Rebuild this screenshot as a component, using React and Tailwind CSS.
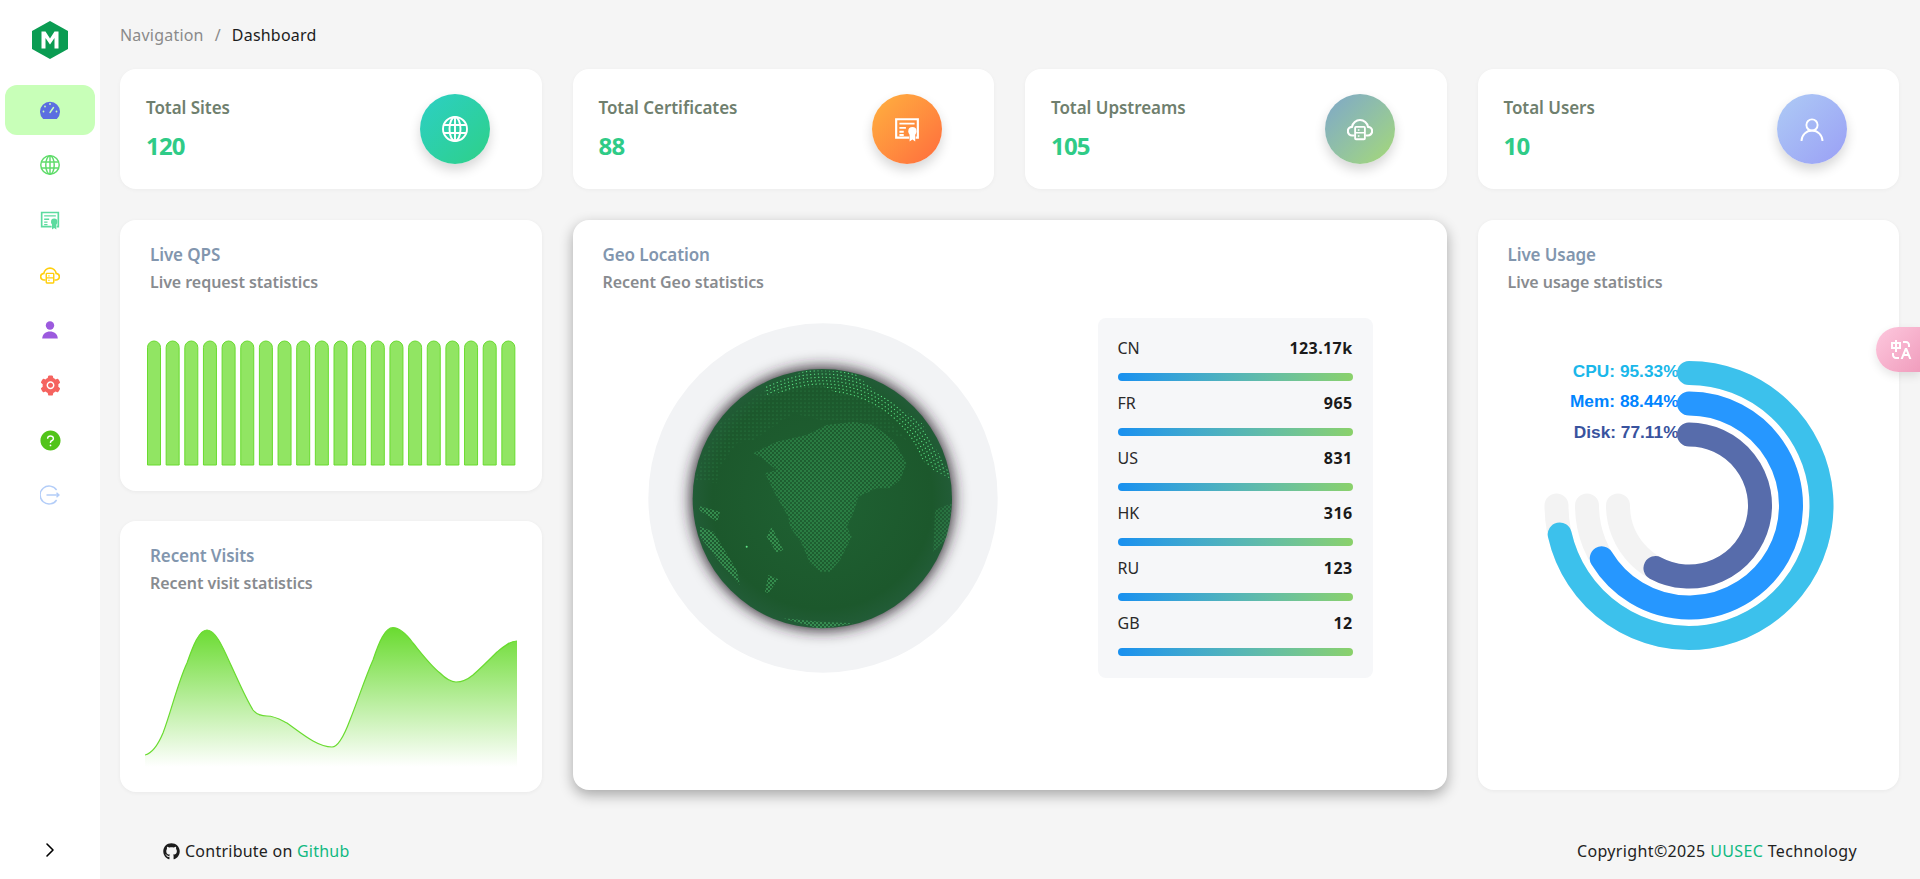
import React from "react";
import { FaGithub } from "react-icons/fa";
import { AiFillSetting, AiFillQuestionCircle } from "react-icons/ai";
import { RiTranslate } from "react-icons/ri";
import { ChevronRight } from "lucide-react";

const GaugeIcon = ({ className }) => (
  <svg viewBox="0 0 20 20" className={className}>
    <path d="M3.2 19 A10 10 0 1 1 16.8 19 Z" fill="currentColor" />
    <path d="M10 12.5 L13.5 7.5" stroke="#c8ffb8" strokeWidth="1.4" strokeLinecap="round" />
    <circle cx="10" cy="4" r="0.9" fill="#c8ffb8" />
    <circle cx="5" cy="6.5" r="0.9" fill="#c8ffb8" />
    <circle cx="3.5" cy="11.5" r="0.9" fill="#c8ffb8" />
    <circle cx="16.5" cy="11.5" r="0.9" fill="#c8ffb8" />
  </svg>
);

const GlobeIcon = ({ className }) => (
  <svg viewBox="0 0 26 26" fill="none" stroke="currentColor" strokeWidth="1.9" className={className}>
    <circle cx="13" cy="13" r="12" />
    <ellipse cx="13" cy="13" rx="5.5" ry="12" />
    <path d="M13 1v24M1.6 9h22.8M1.6 17h22.8" />
  </svg>
);

const CertIcon = ({ className }) => (
  <svg viewBox="0 0 24 24" fill="none" className={className}>
    <path d="M14 20H2V3h20v17h-2" stroke="currentColor" strokeWidth="2" />
    <path d="M5 7h14M5 11h6M5 14.5h4M5 17.5h4" stroke="currentColor" strokeWidth="1.7" />
    <circle cx="17" cy="14" r="3.8" fill="currentColor" />
    <path d="M14.4 15h5.2v8.5l-2.6-1.8-2.6 1.8z" fill="currentColor" />
  </svg>
);

const CloudIcon = ({ className }) => (
  <svg viewBox="0 0 24 24" fill="none" stroke="currentColor" className={className}>
    <path d="M6 18 H5 A4 4 0 0 1 4.6 10 A7.5 7.5 0 0 1 19.4 10 A4 4 0 0 1 19 18 H18" strokeWidth="2" strokeLinecap="round" />
    <rect x="7.5" y="10" width="9" height="11.5" rx="0.8" strokeWidth="1.7" />
    <path d="M7.5 15.5h9M10 13h1.5M10 18.5h1.5" strokeWidth="1.4" />
  </svg>
);

const UserLine = ({ className }) => (
  <svg viewBox="0 0 24 24" fill="none" stroke="currentColor" strokeWidth="1.9" className={className}>
    <circle cx="12" cy="8" r="5.6" />
    <path d="M1.5 24 A10.5 10.5 0 0 1 22.5 24" />
  </svg>
);

const UserSolid = ({ className }) => (
  <svg viewBox="0 0 20 20" fill="currentColor" className={className}>
    <circle cx="10" cy="5.5" r="4.2" />
    <path d="M2.2 18.5 C2.4 13.8 6 11.4 10 11.4 C14 11.4 17.6 13.8 17.8 18.5 Z" />
  </svg>
);

const LogoutIcon = ({ className }) => (
  <svg viewBox="0 0 20 20" fill="none" stroke="currentColor" strokeWidth="1.4" className={className}>
    <path d="M16.6 5 A9 9 0 1 0 16.6 15" />
    <path d="M6.5 10 H19 M16.5 7.8 L19 10 L16.5 12.2" />
  </svg>
);

const Logo = () => (
  <svg viewBox="0 0 36 38" className="w-9 h-[38px]">
    <path d="M18 0 L36 10 V28 L18 38 L0 28 V10 Z" fill="#0a9c52" />
    <path d="M9.5 10.5 H13.5 L18 17.5 L22.5 10.5 H26.5 V27.5 H22.5 V17 L18 23.5 L13.5 17 V27.5 H9.5 Z" fill="#fff" />
  </svg>
);

const navItems = [
  { icon: GaugeIcon, cls: "w-5 h-5 text-[#5b6ee1]", active: true },
  { icon: GlobeIcon, cls: "w-5 h-5 text-[#5fdc6a]" },
  { icon: CertIcon, cls: "w-5 h-5 text-[#5cdb9f]" },
  { icon: CloudIcon, cls: "w-5 h-5 text-[#ffcf0d]" },
  { icon: UserSolid, cls: "w-5 h-5 text-[#9c5ade]" },
  { icon: AiFillSetting, cls: "w-[23px] h-[23px] text-[#f5635f]" },
  { icon: AiFillQuestionCircle, cls: "w-[23px] h-[23px] text-[#52c41a]" },
  { icon: LogoutIcon, cls: "w-5 h-5 text-[#b3cdf8]" },
];

const stats = [
  { title: "Total Sites", value: "120", icon: GlobeIcon, size: "w-[26px] h-[26px]", bg: "bg-linear-to-br from-[#2dcfc4] to-[#2fd087]" },
  { title: "Total Certificates", value: "88", icon: CertIcon, size: "w-[26px] h-[26px]", bg: "bg-linear-to-br from-[#ffb13f] to-[#ff6a3d]" },
  { title: "Total Upstreams", value: "105", icon: CloudIcon, size: "w-[26px] h-[26px]", bg: "bg-linear-to-br from-[#7fa6c9] to-[#a6d972]" },
  { title: "Total Users", value: "10", icon: UserLine, size: "w-6 h-6", bg: "bg-linear-to-br from-[#aecbf5] to-[#9a9ff5]" },
];

const geo = [
  ["CN", "123.17k"],
  ["FR", "965"],
  ["US", "831"],
  ["HK", "316"],
  ["RU", "123"],
  ["GB", "12"],
];

const CardHead = ({ title, sub }) => (
  <>
    <div className="h-6 leading-6 text-[17px] font-semibold text-[#8296ae] tracking-[-0.1px]">{title}</div>
    <div className="h-6 leading-6 mt-[3px] text-base font-semibold text-[#888b8f] tracking-[-0.05px]">{sub}</div>
  </>
);

const QpsChart = () => (
  <svg width="376" height="126" className="block ml-[27px] mt-[46px]">
    {Array.from({ length: 20 }).map((_, i) => {
      const x = 0.5 + i * 18.65;
      return (
        <path
          key={i}
          d={`M${x} 125 V7.5 A6.5 6.5 0 0 1 ${x + 13} 7.5 V125 Z`}
          fill="#91e563"
          stroke="#69db2f"
          strokeWidth="1"
        />
      );
    })}
  </svg>
);

const curve =
  "M0,135 C8,133 13,125 18,113 C26,92 33,62 42,43 C48,26 54,10 62,10 C70,10 77,25 85,43 C93,60 100,77 108,90 C112,95 117,96 122,96 C130,96 136,100 142,103 C155,112 172,127 187,127 C193,127 199,116 205,100 C213,80 220,58 228,40 C234,22 240,7.7 248,7.7 C255,7.7 262,15 268,23 C277,34 286,46 295,53 C300,58 305,62 311,62 C317,62 322,60 328,55 C336,48 344,40 352,32 C358,27 365,21 372,21";

const VisitsChart = () => (
  <svg width="374" height="150" className="block ml-[25px] mt-[25px]">
    <defs>
      <linearGradient id="visits" x1="0" y1="7" x2="0" y2="147" gradientUnits="userSpaceOnUse">
        <stop offset="0" stopColor="#69db2f" />
        <stop offset="1" stopColor="#69db2f" stopOpacity="0" />
      </linearGradient>
    </defs>
    <path d={`${curve} L372,150 L0,150 Z`} fill="url(#visits)" />
    <path d={curve} fill="none" stroke="#69db2f" strokeWidth="1.2" />
  </svg>
);

const landBright = [
  "M240 650 L280 665 L350 780 L360 825 L310 770 L240 680 Z",
  "M236 588 L300 605 L292 635 L240 602 Z",
  "M445 795 L475 808 L445 850 L435 845 Z",
  "M440 680 L455 650 L490 720 L470 728 Z",
  "M490 925 L600 935 L700 940 L600 957 Z",
];

const africa =
  "M400 430 L470 395 L560 375 L620 345 L700 335 L760 345 L820 390 L860 460 L840 510 L810 535 L770 535 L715 560 L700 610 L680 650 L695 680 L660 750 L630 785 L600 785 L570 760 L545 700 L510 650 L505 620 L470 560 L435 490 L470 480 L420 440 Z";

const northDim =
  "M300 340 L430 240 L600 215 L760 270 L860 390 L720 330 L600 330 L520 310 L400 390 L350 400 L300 470 L290 520 L225 510 L250 440 Z";

const rimRight = "M945 600 L995 580 L985 680 L940 725 Z";

const Globe = () => (
  <svg viewBox="84 39 1050 1050" className="w-[350px] h-[350px] shrink-0 ml-[45px] mt-[5px]">
    <defs>
      <radialGradient id="sphere" cx="50%" cy="50%" r="50%">
        <stop offset="0" stopColor="#1f6233" />
        <stop offset="0.85" stopColor="#1c582c" />
        <stop offset="1" stopColor="#225c37" />
      </radialGradient>
      <pattern id="dotsBright" width="12" height="12" patternUnits="userSpaceOnUse">
        <circle cx="3" cy="3" r="2.1" fill="#5ce585" />
        <circle cx="9" cy="9" r="2.1" fill="#5ce585" />
      </pattern>
      <pattern id="dotsDim" width="12" height="12" patternUnits="userSpaceOnUse">
        <circle cx="3" cy="3" r="1.9" fill="#43c06b" />
        <circle cx="9" cy="9" r="1.9" fill="#43c06b" />
      </pattern>
      <pattern id="dotsThin" width="12" height="12" patternUnits="userSpaceOnUse">
        <circle cx="3" cy="3" r="1.6" fill="#3aa860" />
      </pattern>
      <filter id="halo" x="-20%" y="-20%" width="140%" height="140%">
        <feGaussianBlur stdDeviation="22" />
      </filter>
      <clipPath id="rimBand">
        <path d="M750 230 L905 340 L1000 510 L940 480 L850 400 L740 290 L600 225 L440 255 L430 230 L560 180 L700 185 Z" />
      </clipPath>
    </defs>
    <circle cx="609" cy="564" r="524" fill="#f2f3f5" />
    <circle cx="607" cy="566" r="394" fill="#2a2229" filter="url(#halo)" />
    <circle cx="607" cy="566" r="389" fill="url(#sphere)" />
    <path d={northDim} fill="url(#dotsThin)" opacity="0.6" />
    <path d={africa} fill="url(#dotsDim)" opacity="0.9" />
    <path d={rimRight} fill="url(#dotsDim)" opacity="0.7" />
    {landBright.map((d, i) => (
      <path key={i} d={d} fill="url(#dotsBright)" />
    ))}
    <g clipPath="url(#rimBand)" fill="none" stroke="#5ce585" strokeWidth="3.2" strokeDasharray="3.5 8">
      {[384, 374, 364, 354, 344, 334, 324].map((r) => (
        <circle key={r} cx="607" cy="566" r={r} />
      ))}
    </g>
    <circle cx="380" cy="710" r="3" fill="#5fe585" />
  </svg>
);

const polar = (cx, cy, r, deg) => {
  const a = ((deg - 90) * Math.PI) / 180;
  return [cx + r * Math.cos(a), cy + r * Math.sin(a)];
};

const arcPath = (cx, cy, r, deg) => {
  const [x, y] = polar(cx, cy, r, deg);
  return `M${cx} ${cy - r} A${r} ${r} 0 ${deg > 180 ? 1 : 0} 1 ${x} ${y}`;
};

const rings = [
  { label: "CPU: 95.33%", pct: 95.33, r: 132.5, color: "#3cc1ec", text: "#1ab7ea", y: 37 },
  { label: "Mem: 88.44%", pct: 88.44, r: 102, color: "#2697ff", text: "#0084ff", y: 67 },
  { label: "Disk: 77.11%", pct: 77.11, r: 71, color: "#576cab", text: "#39539e", y: 98 },
];

const UsageChart = () => (
  <svg width="421" height="330" className="block mt-[46px]">
    {rings.map((r) => (
      <path key={r.label} d={arcPath(211, 165.5, r.r, 270)} fill="none" stroke="#f3f3f3" strokeWidth="24" strokeLinecap="round" />
    ))}
    {rings.map((r) => (
      <text key={r.label} x="200.5" y={r.y} textAnchor="end" fontFamily="'Liberation Sans', Arial, sans-serif" fontSize="17.3" fontWeight="700" fill={r.text}>
        {r.label}
      </text>
    ))}
    {rings.map((r) => (
      <path key={r.label} d={arcPath(211, 165.5, r.r, (r.pct / 100) * 270)} fill="none" stroke={r.color} strokeWidth="24" strokeLinecap="round" />
    ))}
  </svg>
);

export default function App() {
  return (
    <div className="flex h-screen overflow-hidden bg-[#f5f5f5] font-['Noto_Sans','Open_Sans',sans-serif] text-[#222]">
      <aside className="w-[100px] shrink-0 bg-white flex flex-col items-center">
        <div className="h-[85px] pt-[21px]">
          <Logo />
        </div>
        <nav className="flex flex-col gap-[5px] w-[90px]">
          {navItems.map((item, i) => (
            <div key={i} className={`h-[50px] rounded-xl flex items-center justify-center ${item.active ? "bg-[#c8ffb8]" : ""}`}>
              <item.icon className={item.cls} />
            </div>
          ))}
        </nav>
        <div className="mt-auto h-[58px] flex items-center">
          <ChevronRight className="w-6 h-6 text-black" strokeWidth={1.6} />
        </div>
      </aside>

      <main className="flex-1 pl-5 pr-[21px]">
        <div className="h-[69px] flex items-center text-base tracking-[0.2px]">
          <span className="text-[#8a8a8a]">Navigation</span>
          <span className="text-[#8a8a8a] mx-[11px]">/</span>
          <span className="text-[#1c1c1c]">Dashboard</span>
        </div>

        <div className="grid grid-cols-4 gap-[31px]">
          {stats.map((s) => (
            <div key={s.title} className="h-[120px] bg-white rounded-2xl shadow-[0_1px_4px_rgba(0,0,0,0.04)] flex items-center justify-between pl-[26px] pr-[52px]">
              <div>
                <div className="h-6 leading-6 text-[17px] font-semibold text-[#6f7f6e] tracking-[-0.05px]">{s.title}</div>
                <div className="h-8 leading-8 mt-[10px] text-2xl font-bold text-[#2fcb87] tracking-[-0.8px]">{s.value}</div>
              </div>
              <div className={`w-[70px] h-[70px] rounded-full flex items-center justify-center text-white shadow-[0_6px_12px_rgba(0,0,0,0.16)] ${s.bg}`}>
                <s.icon className={s.size} />
              </div>
            </div>
          ))}
        </div>

        <div className="grid grid-cols-4 gap-[31px] mt-[31px] items-start">
          <div className="flex flex-col gap-[30px]">
            <div className="h-[271px] bg-white rounded-2xl shadow-[0_1px_4px_rgba(0,0,0,0.05)]">
              <div className="pt-[23px] px-[30px]">
                <CardHead title="Live QPS" sub="Live request statistics" />
              </div>
              <QpsChart />
            </div>
            <div className="h-[271px] bg-white rounded-2xl shadow-[0_1px_4px_rgba(0,0,0,0.05)]">
              <div className="pt-[23px] px-[30px]">
                <CardHead title="Recent Visits" sub="Recent visit statistics" />
              </div>
              <VisitsChart />
            </div>
          </div>

          <div className="col-span-2 h-[570px] bg-white rounded-2xl shadow-[0_5px_14px_rgba(0,0,0,0.32)]">
            <div className="pt-[23px] px-[30px]">
              <CardHead title="Geo Location" sub="Recent Geo statistics" />
            </div>
            <div className="flex mt-6 pl-[30px]">
              <Globe />
              <div className="ml-[100px] w-[275px] h-[360px] bg-[#f6f7f9] rounded-lg px-5 pt-[18px] flex flex-col gap-[10px]">
                {geo.map(([code, val]) => (
                  <div key={code}>
                    <div className="flex justify-between h-6 leading-6 text-base">
                      <span className="text-[#2a2a2a]">{code}</span>
                      <span className="font-bold text-[#1a1a1a] tracking-[0.4px]">{val}</span>
                    </div>
                    <div className="h-2 mt-[13px] rounded-full bg-linear-to-r from-[#1890f0] to-[#8ad16a]" />
                  </div>
                ))}
              </div>
            </div>
          </div>

          <div className="h-[570px] bg-white rounded-2xl shadow-[0_1px_4px_rgba(0,0,0,0.05)]">
            <div className="pt-[23px] px-[30px]">
              <CardHead title="Live Usage" sub="Live usage statistics" />
            </div>
            <UsageChart />
          </div>
        </div>

        <div className="flex justify-between mt-[47px] h-6 leading-6 text-base pl-[43px] pr-[42px] tracking-[0.24px]">
          <div className="flex items-center">
            <FaGithub className="w-[17px] h-[17px] mr-[5px] text-[#1c1c1c]" />
            <span>
              Contribute on <span className="text-[#10b981]">Github</span>
            </span>
          </div>
          <div className="tracking-[0.36px]">
            Copyright©2025 <span className="text-[#10b981]">UUSEC</span> Technology
          </div>
        </div>
      </main>

      <div className="fixed right-0 top-[327px] w-11 h-[45px] rounded-l-full bg-linear-to-br from-[#fdc8de] to-[#f09dbd] shadow-[0_4px_10px_rgba(0,0,0,0.1)] flex items-center justify-end pr-[7px] text-white">
        <RiTranslate className="w-[24px] h-[24px]" />
      </div>
    </div>
  );
}
